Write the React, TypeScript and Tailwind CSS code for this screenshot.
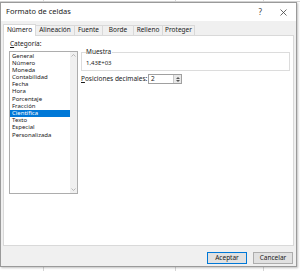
import React from "react";

const categories = [
  "General",
  "Número",
  "Moneda",
  "Contabilidad",
  "Fecha",
  "Hora",
  "Porcentaje",
  "Fracción",
  "Científica",
  "Texto",
  "Especial",
  "Personalizada",
];

const tabs = [
  { label: "Número", w: "w-[33px]" },
  { label: "Alineación", w: "w-[40px]" },
  { label: "Fuente", w: "w-[29px]" },
  { label: "Borde", w: "w-[32px]" },
  { label: "Relleno", w: "w-[30px]" },
  { label: "Proteger", w: "w-[33px]" },
];

export default function App() {
  return (
    <div
      className="relative w-[300px] h-[271px] overflow-hidden bg-white text-[#1a1a1a]"
      style={{ fontFamily: '"Noto Sans", "Open Sans", sans-serif' }}
    >
      {/* spreadsheet grid behind the dialog */}
      <div className="absolute left-[43px] top-0 w-px h-full bg-[#d6d6d6]" />
      <div className="absolute left-[175px] top-0 w-px h-full bg-[#d6d6d6]" />
      <div className="absolute left-[263px] top-0 w-px h-full bg-[#d6d6d6]" />
      <div className="absolute left-0 top-[1px] w-full h-px bg-[#d6d6d6]" />

      {/* dialog window */}
      <div className="absolute left-0 top-[2px] w-[297px] h-[265px] flex flex-col bg-[#f0f0f0] border border-[#9a9a9a] shadow-[1px_1px_2px_rgba(0,0,0,0.25)]">
        {/* title bar */}
        <div className="h-[18px] bg-white flex items-center pl-[5px] pr-[9px]">
          <span className="text-[7.5px] leading-none text-[#222]">Formato de celdas</span>
          <span className="ml-auto text-[8px] leading-none text-[#444]">?</span>
          <svg className="ml-[18px]" width="7" height="7" viewBox="0 0 7 7">
            <path d="M0.5 0.5 L6.5 6.5 M6.5 0.5 L0.5 6.5" stroke="#444" strokeWidth="0.8" fill="none" />
          </svg>
        </div>

        {/* tabs */}
        <div className="flex items-end pl-[2px] pt-[3px] h-[14px]">
          {tabs.map((t, i) => (
            <div
              key={t.label}
              className={`${t.w} flex items-center justify-center text-[6.5px] leading-none border border-b-0 ${
                i === 0
                  ? "h-[12px] bg-white border-[#d9d9d9] relative top-px z-10"
                  : "h-[10px] bg-[#f0f0f0] border-[#d9d9d9] -ml-px"
              }`}
            >
              {t.label}
            </div>
          ))}
        </div>

        {/* tab panel */}
        <div className="mx-[2px] h-[211px] bg-white border border-[#d9d9d9] flex pt-[5px] pl-[5px] pr-[3px] gap-[3px]">
          {/* category column */}
          <div className="flex flex-col w-[69px]">
            <span className="text-[6.5px] leading-none pl-[1px] h-[10px]">
              <span className="underline">C</span>ategoría:
            </span>
            <div className="h-[143px] border border-[#adadad] flex">
              <div className="flex-1 flex flex-col pt-[0.5px]">
                {categories.map((c) => (
                  <div
                    key={c}
                    className={`pl-[2px] h-[7.2px] text-[6px] leading-[7.2px] overflow-hidden ${
                      c === "Científica" ? "bg-[#0078d7] text-white" : ""
                    }`}
                  >
                    {c}
                  </div>
                ))}
              </div>
              <div className="w-[7px] bg-[#f0f0f0] flex flex-col items-center justify-between py-[2px]">
                <svg width="5" height="3" viewBox="0 0 5 3">
                  <path d="M0.5 2.5 L2.5 0.5 L4.5 2.5" stroke="#a0a0a0" strokeWidth="0.7" fill="none" />
                </svg>
                <svg width="5" height="3" viewBox="0 0 5 3">
                  <path d="M0.5 0.5 L2.5 2.5 L4.5 0.5" stroke="#a0a0a0" strokeWidth="0.7" fill="none" />
                </svg>
              </div>
            </div>
          </div>

          {/* right side */}
          <div className="flex-1 flex flex-col pt-[11px]">
            <div className="relative h-[19px] border border-[#dcdcdc] flex items-end pl-[4px] pb-[4px]">
              <span className="absolute -top-[4px] left-[4px] bg-white pr-[1px] text-[6.5px] leading-none">
                Muestra
              </span>
              <span className="text-[6px] leading-none">1,43E+03</span>
            </div>
            <div className="flex items-center mt-[3px] h-[10px]">
              <span className="text-[6.5px] leading-none w-[67px]">
                <span className="underline">P</span>osiciones decimales:
              </span>
              <div className="flex h-[10px] border border-[#a0a0a0]">
                <div className="w-[24px] flex items-center pl-[2px] text-[6.5px] leading-none">2</div>
                <div className="w-[8px] bg-[#e8e8e8] border-l border-[#c8c8c8] flex flex-col items-center justify-center gap-[1px]">
                  <svg width="4" height="2" viewBox="0 0 4 2">
                    <path d="M0 2 L2 0 L4 2 Z" fill="#555" />
                  </svg>
                  <svg width="4" height="2" viewBox="0 0 4 2">
                    <path d="M0 0 L2 2 L4 0 Z" fill="#555" />
                  </svg>
                </div>
              </div>
            </div>
          </div>
        </div>

        {/* buttons */}
        <div className="flex justify-end gap-[6px] pr-[3px] pt-[6px]">
          <button className="w-[40px] h-[12px] bg-[#e1e1e1] border border-[#0078d7] text-[6.5px] leading-none">
            Aceptar
          </button>
          <button className="w-[40px] h-[12px] bg-[#e1e1e1] border border-[#adadad] text-[6.5px] leading-none">
            Cancelar
          </button>
        </div>
      </div>
    </div>
  );
}
